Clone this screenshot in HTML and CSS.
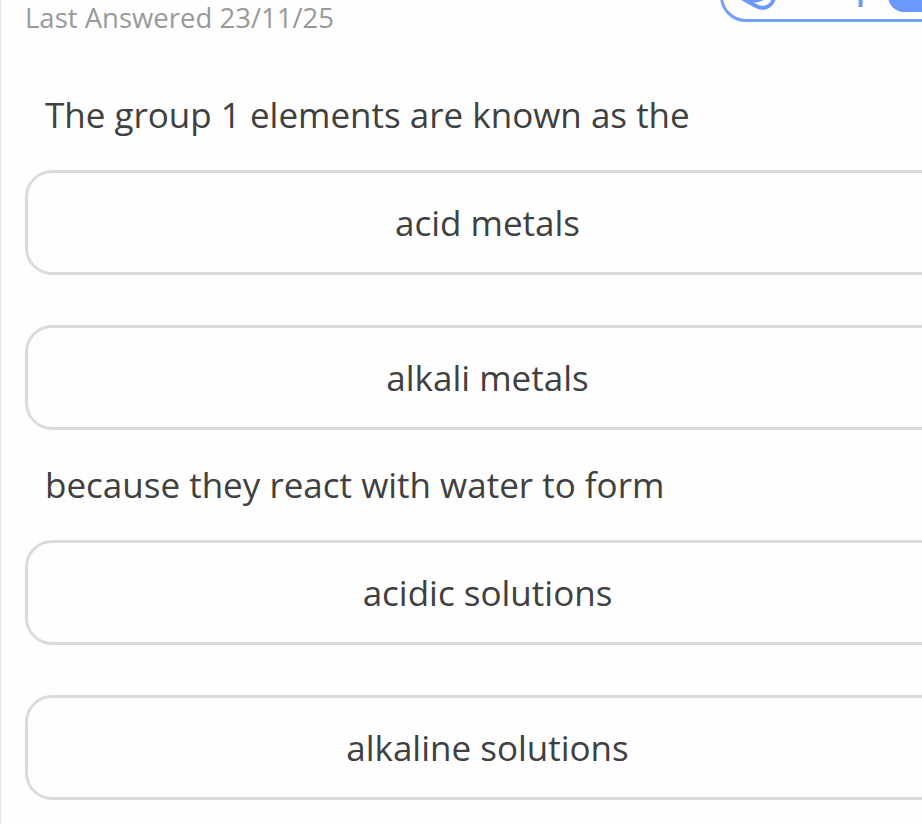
FILE: index.html
```html
<!DOCTYPE html>
<html lang="en">
<head>
    <meta charset="UTF-8">
    <meta name="viewport" content="width=device-width, initial-scale=1.0">
    <title>Quiz</title>
    <link rel="stylesheet" href="styles.css">
</head>
<body>
    <main class="quiz">
        <header class="quiz-header">
            <p class="last-answered">Last Answered 23/11/25</p>
            <div class="toolbar">
                <svg class="toolbar-icon" width="150" height="20" viewBox="0 0 150 20" fill="none" stroke="#6b98fc">
                    <path d="M11 -5L30 5.5Q39.5 11 46 4Q48.5 1 49.5 -3" stroke-width="3.8"/>
                    <path d="M23 0.5Q33 2.5 40 -2.5" stroke-width="3"/>
                    <path d="M135.6 -10V7" stroke-width="4"/>
                </svg>
                <span class="toolbar-toggle"></span>
            </div>
        </header>

        <section class="question">
            <h2>The group 1 elements are known as the</h2>
            <button type="button">acid metals</button>
            <button type="button">alkali metals</button>
        </section>

        <section class="question">
            <h2>because they react with water to form</h2>
            <button type="button">acidic solutions</button>
            <button type="button">alkaline solutions</button>
        </section>
    </main>
</body>
</html>
```

FILE: styles.css
```css
* {
    box-sizing: border-box;
}

body {
    margin: 0;
    height: 824px;
    overflow: hidden;
    background-color: #fefefe;
    color: #404040;
    font-family: "Open Sans", sans-serif;
}

.quiz {
    width: 975px;
    height: 824px;
    padding: 0 25px 0 24px;
    border-left: 1px solid #e6e6e6;
}

.quiz-header {
    display: flex;
    justify-content: space-between;
    height: 80px;
}

.last-answered {
    margin: 0;
    font-size: 27.5px;
    line-height: 35px;
    color: #999;
}

.toolbar {
    display: flex;
    justify-content: space-between;
    align-items: flex-end;
    width: 230px;
    height: 60px;
    margin-top: -38px;
    padding-bottom: 7px;
    border: 3px solid #74a0fc;
    border-radius: 26px;
    overflow: hidden;
}

.toolbar-icon {
    flex-shrink: 0;
    margin: 0 0 -8px 2px;
}

.toolbar-toggle {
    width: 59px;
    height: 40px;
    border-radius: 16px;
    background-color: #6b98fc;
}

.question h2 {
    margin: 0;
    padding: 0 20px;
    height: 90px;
    font-size: 35px;
    font-weight: 400;
    line-height: 69px;
}

.question button {
    display: block;
    width: 100%;
    height: 105px;
    margin-bottom: 50px;
    padding: 0 0 1px;
    border: 3px solid #dbdbdb;
    border-radius: 27px;
    background: none;
    color: inherit;
    font: inherit;
    font-size: 35px;
}

.question button:last-child {
    margin-bottom: 20px;
}
```
